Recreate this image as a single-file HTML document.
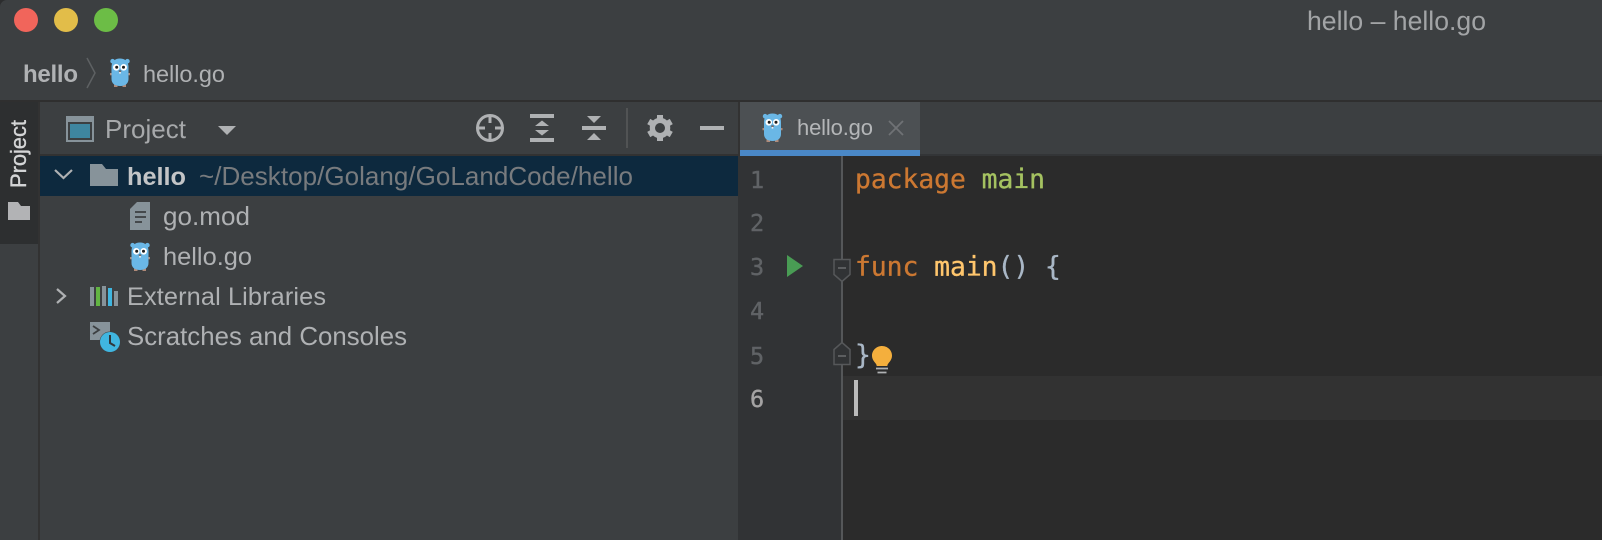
<!DOCTYPE html>
<html><head><meta charset="utf-8"><style>
html,body{margin:0;padding:0;background:#3c3f41;width:1602px;height:540px;overflow:hidden}
svg{display:block}
text{font-family:"Liberation Sans",sans-serif}
.m{font-family:"DejaVu Sans Mono","Liberation Mono",monospace;font-size:26.3px;stroke-width:.35px}
.n{font-family:"DejaVu Sans Mono","Liberation Mono",monospace;font-size:23.5px;fill:#606366;stroke:#606366;stroke-width:.4px}
</style></head><body>
<svg width="1602" height="540" viewBox="0 0 1602 540" xmlns="http://www.w3.org/2000/svg">
<defs>
<symbol id="g" viewBox="0 0 20 29">
<path d="M0 15h3v2.200H0zM17 15h3v2.200h-3zM4 26.500h3.500V29H4zM12.500 26.500H16V29h-3.500z" fill="#b08a78"/>
<circle cx="2.600" cy="3.200" r="2.300" fill="#6ab7e6"/><circle cx="17.400" cy="3.200" r="2.300" fill="#6ab7e6"/>
<path d="M1.500 9C1.500 3.500 5 .5 10 .5s8.500 3 8.500 8.500v12c0 4.500-3.500 7-8.500 7s-8.500-2.500-8.500-7z" fill="#6ab7e6"/>
<circle cx="6.300" cy="9.300" r="3.300" fill="#fff"/><circle cx="13.700" cy="9.300" r="3.300" fill="#fff"/>
<circle cx="6.700" cy="9.300" r="1.500" fill="#1d1d1d"/><circle cx="13.500" cy="9.300" r="1.500" fill="#1d1d1d"/>
<path d="M8.800 12.500h2.400v1.300H8.800z" fill="#5b3b30"/><path d="M9.200 13.800h1.600v1.800H9.200z" fill="#f2f2f2"/>
</symbol>
</defs>

<rect width="1602" height="540" fill="#3c3f41"/>
<path d="M0 0h7A7 7 0 0 0 0 7z" fill="#2c2d2e"/>
<circle cx="26" cy="20" r="12" fill="#f1655b"/>
<circle cx="66" cy="20" r="12" fill="#e2bd49"/>
<circle cx="106" cy="20" r="12" fill="#6cbd46"/>
<text x="1307" y="30" font-size="26.600" fill="#a2a4a6" textLength="179">hello – hello.go</text>

<text x="23" y="82" font-size="24" font-weight="700" fill="#b0b2b4" textLength="55">hello</text>
<path d="M87 58l8 15-8 15" fill="none" stroke="#5e6163" stroke-width="1.500"/>
<use href="#g" x="110" y="58" width="20" height="29"/>
<text x="143" y="82" font-size="23.500" fill="#afb1b3" textLength="82">hello.go</text>

<rect y="100" width="1602" height="2" fill="#2f2f2f"/>

<!-- left tool strip -->
<rect y="102" width="38" height="142" fill="#2d2f30"/>
<rect x="38" y="102" width="2" height="438" fill="#323232"/>
<text transform="translate(26 188) rotate(-90)" font-size="22" fill="#d4d5d6" stroke="#d4d5d6" stroke-width=".35" textLength="68">Project</text>
<path d="M8 202h10l3 4h9v14H8z" fill="#b2b3b5"/>

<!-- project header -->
<rect x="66" y="116" width="28" height="26" fill="#87939a"/>
<rect x="68" y="118" width="24" height="22" fill="#3c3f41"/>
<rect x="66" y="116" width="28" height="6" fill="#87939a"/>
<rect x="70" y="124" width="20" height="14" fill="#3e86a0"/>
<text x="105" y="138" font-size="26" fill="#a7a9ab" textLength="81">Project</text>
<path d="M218 126h18l-9 9z" fill="#afb1b3"/>

<circle cx="490" cy="128" r="12.500" fill="none" stroke="#afb1b3" stroke-width="3"/>
<path d="M490 115v8M490 133v8M477 128h8M495 128h8" stroke="#afb1b3" stroke-width="3"/>
<path d="M530 114h24v4h-24zM530 138h24v4h-24zM542 120.500l7 5.500h-14zM542 135.500l-7-5.500h14z" fill="#afb1b3"/>
<path d="M582 126h24v4h-24zM594 123l-7-7h14zM594 133l7 7h-14z" fill="#afb1b3"/>
<rect x="626" y="108" width="2" height="40" fill="#515354"/>
<g transform="translate(660 128)">
<circle r="7.500" fill="none" stroke="#afb1b3" stroke-width="5.500"/>
<g fill="#afb1b3"><rect x="-3" y="-13" width="6" height="26"/><rect x="-3" y="-13" width="6" height="26" transform="rotate(60)"/><rect x="-3" y="-13" width="6" height="26" transform="rotate(120)"/></g>
<circle r="5" fill="#3c3f41"/>
</g>
<rect x="700" y="126" width="24" height="4" fill="#afb1b3"/>
<rect x="40" y="154" width="698" height="2" fill="#323232"/>

<!-- tree -->
<rect x="40" y="156" width="698" height="40" fill="#0d293e"/>
<path d="M55 170l8.500 8 8.500-8" fill="none" stroke="#afb1b3" stroke-width="2.200"/>
<path d="M90 164h12l4 5h12v17H90z" fill="#87939a"/>
<text x="127" y="185" font-size="25.300" font-weight="700" fill="#c3c5c7" textLength="59">hello</text>
<text x="199" y="185" font-size="26" fill="#787b7e" textLength="434">~/Desktop/Golang/GoLandCode/hello</text>

<path d="M137 202h13v28h-20v-21z" fill="#87939a"/>
<path d="M135 212h11M135 217h11M135 222h7" stroke="#3c3f41" stroke-width="1.800"/>
<text x="163" y="225" font-size="26" fill="#afb1b3" textLength="87">go.mod</text>
<use href="#g" x="130" y="242" width="20" height="29"/>
<text x="163" y="265" font-size="25.400" fill="#afb1b3" textLength="89">hello.go</text>

<path d="M57 289l8 7-8 7" fill="none" stroke="#afb1b3" stroke-width="2.200"/>
<rect x="90" y="287" width="4" height="19" fill="#87939a"/>
<rect x="96" y="287" width="4" height="19" fill="#62b543"/>
<rect x="102" y="286" width="4" height="20" fill="#87939a"/>
<rect x="108" y="288" width="4" height="18" fill="#40b6e0"/>
<rect x="114" y="291" width="4" height="15" fill="#87939a"/>
<text x="127" y="305" font-size="25.300" fill="#afb1b3" textLength="199">External Libraries</text>

<rect x="90" y="322" width="20" height="18" fill="#87939a"/>
<path d="M93 326l6 4-6 4" fill="none" stroke="#3c3f41" stroke-width="1.800"/>
<circle cx="110" cy="342" r="10.500" fill="#3c3f41"/>
<circle cx="110" cy="342" r="10" fill="#40b6e0"/>
<path d="M110 335v8l5 3" fill="none" stroke="#31363a" stroke-width="2"/>
<text x="127" y="345" font-size="25.800" fill="#afb1b3" textLength="280">Scratches and Consoles</text>

<!-- editor tabs -->
<rect x="738" y="102" width="2" height="438" fill="#323232"/>
<rect x="740" y="102" width="180" height="48" fill="#4c5053"/>
<rect x="740" y="150" width="180" height="6" fill="#4a88c7"/>
<use href="#g" x="762" y="113" width="21" height="29"/>
<text x="797" y="135" font-size="22" fill="#b4b6b8" textLength="76">hello.go</text>
<path d="M889 121l14 14M903 121l-14 14" stroke="#6f7275" stroke-width="1.800"/>
<rect x="920" y="154" width="682" height="2" fill="#333537"/>

<!-- editor -->
<rect x="738" y="156" width="864" height="384" fill="#2b2b2b"/>
<rect x="738" y="156" width="104" height="384" fill="#313335"/>
<rect x="843" y="376" width="759" height="44" fill="#323232"/>
<rect x="841" y="156" width="2" height="384" fill="#555759"/>

<text class="n" x="750" y="188">1</text>
<text class="n" x="750" y="231">2</text>
<text class="n" x="750" y="275">3</text>
<text class="n" x="750" y="319">4</text>
<text class="n" x="750" y="364">5</text>
<text class="n" x="750" y="407" style="fill:#a4a3a3;stroke:#a4a3a3">6</text>

<text class="m" x="855" y="188" xml:space="preserve"><tspan fill="#cc7832" stroke="#cc7832">package</tspan><tspan fill="#a5c261" stroke="#a5c261"> main</tspan></text>
<text class="m" x="855" y="275.500" xml:space="preserve"><tspan fill="#cc7832" stroke="#cc7832">func</tspan><tspan fill="#ffc66d" stroke="#ffc66d"> main</tspan><tspan fill="#a9b7c6" stroke="#a9b7c6">() {</tspan></text>
<text class="m" x="855" y="364" fill="#a9b7c6" stroke="#a9b7c6">}</text>

<path d="M787 255l16 11-16 11z" fill="#499c54"/>
<path d="M834 259.500h16v15l-8 7-8-7z" fill="#313335" stroke="#56585a" stroke-width="1.500"/>
<path d="M838 268h8" stroke="#6a6c6e" stroke-width="1.500"/>
<path d="M834 364.500h16v-15l-8-7-8 7z" fill="#313335" stroke="#56585a" stroke-width="1.500"/>
<path d="M838 356h8" stroke="#6a6c6e" stroke-width="1.500"/>

<path d="M882 346c5.500 0 10 4.300 10 9.600 0 3.800-2.200 5.900-3.700 7.900-.6.800-.9 1.500-1 2.500h-10.600c-.1-1-.4-1.700-1-2.500-1.500-2-3.700-4.100-3.700-7.900 0-5.300 4.500-9.600 10-9.600z" fill="#f4af3d"/>
<path d="M876 368.500h12M877.500 372.500h9" stroke="#afb1b3" stroke-width="1.800"/>

<rect x="854" y="380" width="4" height="36" fill="#bbbbbb"/>
</svg>
</body></html>
